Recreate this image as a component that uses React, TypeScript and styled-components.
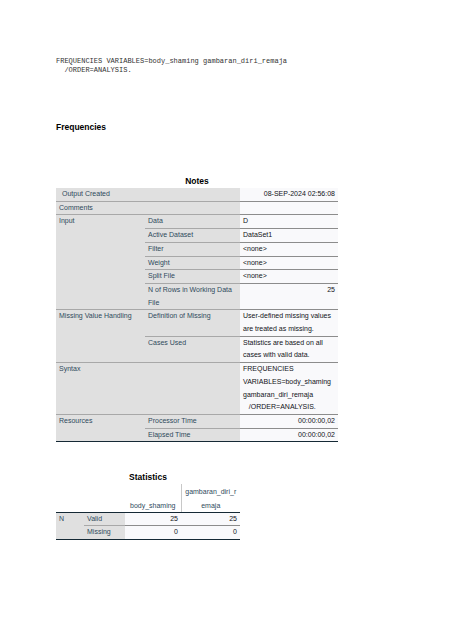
import React from "react";
import styled, { createGlobalStyle } from "styled-components";

const Global = createGlobalStyle`
  html, body { margin: 0; padding: 0; background: #ffffff; }
  body { font-family: "Liberation Sans", Arial, sans-serif; }
`;

const Page = styled.div`
  width: 474px;
  min-height: 632px;
  box-sizing: border-box;
  padding: 57px 0 0 56px;
  display: flex;
  flex-direction: column;
  align-items: flex-start;
`;

const SyntaxBlock = styled.pre`
  margin: 0;
  font-family: "Liberation Mono", "Courier New", monospace;
  font-size: 7px;
  line-height: 9px;
  color: #333333;
`;

const Heading = styled.div`
  margin-top: 46px;
  font-family: "Liberation Sans", Arial, sans-serif;
  font-weight: bold;
  font-size: 8.5px;
  line-height: 12px;
  color: #000;
`;

const TableBlock = styled.div<{ $top: number }>`
  margin-top: ${(p) => p.$top}px;
  display: flex;
  flex-direction: column;
  align-items: stretch;
`;

const Title = styled.div`
  text-align: center;
  font-weight: bold;
  font-size: 8.5px;
  line-height: 12px;
  color: #000;
  margin-bottom: 1px;
`;

const Table = styled.table<{ $lh: number }>`
  border-collapse: collapse;
  table-layout: fixed;
  font-size: 7px;
  line-height: ${(p) => p.$lh}px;
  border-bottom: 1.5px solid #152935;
`;

const Label = styled.td<{ $indent?: number; $line?: boolean }>`
  background: #e0e0e0;
  color: #2f4a5c;
  padding: 0 3px 0 ${(p) => p.$indent ?? 3}px;
  vertical-align: top;
  text-align: left;
  border-bottom: ${(p) => (p.$line ? "1px solid #a8a8a8" : "none")};
`;

const Value = styled.td<{ $align?: string; $line?: boolean }>`
  background: #f9f9fb;
  color: #111318;
  padding: 0 3px;
  vertical-align: top;
  text-align: ${(p) => p.$align ?? "left"};
  border-bottom: ${(p) => (p.$line ? "1px solid #8c8c8c" : "none")};
`;

const Pre = styled.span`
  white-space: pre-wrap;
`;

const HeadCell = styled.th<{ $divider?: boolean }>`
  background: #ffffff;
  color: #2f4a5c;
  font-weight: normal;
  padding: 1px 3px 0;
  line-height: 13.3px;
  vertical-align: bottom;
  text-align: center;
  word-break: break-all;
  border-bottom: 1.5px solid #152935;
  border-left: ${(p) => (p.$divider ? "1px solid #c8c8c8" : "none")};
`;

const Blank = styled.th`
  background: #ffffff;
  border-bottom: 1.5px solid #152935;
`;

export default function App() {
  return (
    <>
      <Global />
      <Page>
        <SyntaxBlock>
          {"FREQUENCIES VARIABLES=body_shaming gambaran_diri_remaja\n  /ORDER=ANALYSIS."}
        </SyntaxBlock>
        <Heading>Frequencies</Heading>

        <TableBlock $top={42}>
          <Title>Notes</Title>
          <Table $lh={12.7} style={{ width: 282 }}>
            <colgroup>
              <col style={{ width: 89 }} />
              <col style={{ width: 95 }} />
              <col style={{ width: 98 }} />
            </colgroup>
            <tbody>
              <tr>
                <Label colSpan={2} $indent={6} $line>Output Created</Label>
                <Value $align="right" $line>08-SEP-2024 02:56:08</Value>
              </tr>
              <tr>
                <Label colSpan={2} $line>Comments</Label>
                <Value $line></Value>
              </tr>
              <tr>
                <Label rowSpan={6} $line>Input</Label>
                <Label $line>Data</Label>
                <Value $line>D</Value>
              </tr>
              <tr>
                <Label $line>Active Dataset</Label>
                <Value $line>DataSet1</Value>
              </tr>
              <tr>
                <Label $line>Filter</Label>
                <Value $line>&lt;none&gt;</Value>
              </tr>
              <tr>
                <Label $line>Weight</Label>
                <Value $line>&lt;none&gt;</Value>
              </tr>
              <tr>
                <Label $line>Split File</Label>
                <Value $line>&lt;none&gt;</Value>
              </tr>
              <tr>
                <Label $line>N of Rows in Working Data File</Label>
                <Value $align="right" $line>25</Value>
              </tr>
              <tr>
                <Label rowSpan={2} $line>Missing Value Handling</Label>
                <Label $line>Definition of Missing</Label>
                <Value $line>User-defined missing values are treated as missing.</Value>
              </tr>
              <tr>
                <Label $line>Cases Used</Label>
                <Value $line>Statistics are based on all cases with valid data.</Value>
              </tr>
              <tr>
                <Label colSpan={2} $line>Syntax</Label>
                <Value $line>
                  <Pre>{"FREQUENCIES VARIABLES=body_shaming gambaran_diri_remaja\n   /ORDER=ANALYSIS."}</Pre>
                </Value>
              </tr>
              <tr>
                <Label rowSpan={2}>Resources</Label>
                <Label $line>Processor Time</Label>
                <Value $align="right" $line>00:00:00,02</Value>
              </tr>
              <tr>
                <Label>Elapsed Time</Label>
                <Value $align="right">00:00:00,02</Value>
              </tr>
            </tbody>
          </Table>
        </TableBlock>

        <TableBlock $top={29}>
          <Title>Statistics</Title>
          <Table $lh={12.5} style={{ width: 184 }}>
            <colgroup>
              <col style={{ width: 28 }} />
              <col style={{ width: 41 }} />
              <col style={{ width: 56 }} />
              <col style={{ width: 59 }} />
            </colgroup>
            <thead>
              <tr>
                <Blank colSpan={2}></Blank>
                <HeadCell>body_shaming</HeadCell>
                <HeadCell $divider>gambaran_diri_remaja</HeadCell>
              </tr>
            </thead>
            <tbody>
              <tr>
                <Label rowSpan={2}>N</Label>
                <Label $line>Valid</Label>
                <Value $align="right" $line>25</Value>
                <Value $align="right" $line>25</Value>
              </tr>
              <tr>
                <Label>Missing</Label>
                <Value $align="right">0</Value>
                <Value $align="right">0</Value>
              </tr>
            </tbody>
          </Table>
        </TableBlock>
      </Page>
    </>
  );
}
